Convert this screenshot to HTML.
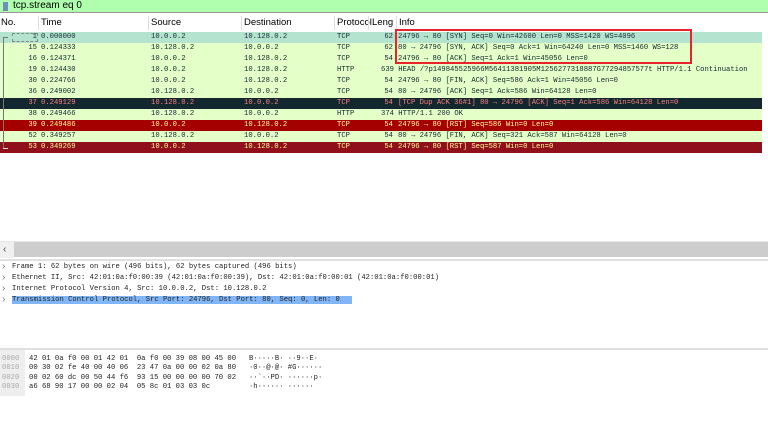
<!DOCTYPE html>
<html><head><style>
*{margin:0;padding:0;box-sizing:border-box}
body{width:768px;height:436px;background:#fff;position:relative;overflow:hidden;font-family:"Liberation Mono",monospace;font-size:7.2px}
.filter{position:absolute;left:0;top:0;width:768px;height:13px;background:#afffaf;border-bottom:1px solid #999;font-family:"Liberation Sans",sans-serif;font-size:10px;line-height:12px;padding-left:13px;color:#000}
.filter .bm{position:absolute;left:3px;top:2px;width:5px;height:9px;background:#6f8fbf}
.hdr{position:absolute;top:14px;left:0;width:768px;height:18px;font-family:"Liberation Sans",sans-serif;font-size:9.5px;line-height:18px;background:#fff}
.hdr span{position:absolute;top:0}
.hdr i{position:absolute;top:2px;width:1px;height:14px;background:#ddd}
.row{position:absolute;left:0;width:762px;height:11px;line-height:11px;white-space:pre}
.row span{position:absolute;top:0}
.g{background:#e4ffc7;color:#12272e}
.s{background:#b4e4d0;color:#12272e}
.d{background:#12272e;color:#f78080}
.r{background:#a40000;color:#fffc9c}
.r2{background:#8f0f1b;color:#fffc9c}
.box{position:absolute;left:395px;top:29px;width:297px;height:35px;border:2px solid #e8232a}
.sb{position:absolute;left:0;top:241px;width:768px;height:16px;background:#cdcdcd;border-top:1px solid #e6e6e6}
.sb .l{position:absolute;left:0;top:0;width:14px;height:16px;background:#f0f0f0;font-family:"Liberation Sans";font-size:10px;line-height:15px;padding-left:3px;color:#444}
.det{position:absolute;left:0;top:259px;width:768px;border-top:2px solid #e0e0e0}
.dl{height:11px;line-height:11px;padding-left:12px;white-space:pre;position:relative;color:#222}
.dl:before{content:"›";position:absolute;left:2px;top:-1px;color:#777;font-family:"Liberation Sans";font-size:10px}
.dl.sel span{background:#80b6f6;padding-right:12px}
.hex{position:absolute;left:0;top:348px;width:768px;height:88px;border-top:2px solid #e0e0e0}
.gut{position:absolute;left:0;top:0;width:25px;height:46px;background:#eee}
.hl{position:absolute;left:0;height:9.3px;line-height:9.3px;white-space:pre;color:#222}
.hl b{font-weight:normal;color:#aaa;position:absolute;left:2px}
</style></head><body>
<div class="filter"><div class="bm"></div>tcp.stream eq 0</div>
<div class="hdr">
<span style="left:1px">No.</span><i style="left:38px"></i>
<span style="left:41px">Time</span><i style="left:148px"></i>
<span style="left:151px">Source</span><i style="left:241px"></i>
<span style="left:244px">Destination</span><i style="left:334px"></i>
<span style="left:337px">Protocol</span><i style="left:368px"></i>
<span style="left:372px;background:#fff;width:24px;overflow:hidden">Leng</span><i style="left:396px"></i>
<span style="left:399px">Info</span>
</div>
<div class="row s" style="top:32px"><span style="left:12px;top:1px;width:26px;height:9px;border:1px dashed #888"></span><span style="right:725px">1</span><span style="left:41px">0.000000</span><span style="left:151px">10.0.0.2</span><span style="left:244px">10.128.0.2</span><span style="left:337px">TCP</span><span style="right:369px">62</span><span style="left:398px">24796 → 80 [SYN] Seq=0 Win=42600 Len=0 MSS=1420 WS=4096</span></div>
<div class="row g" style="top:43px"><span style="right:725px">15</span><span style="left:41px">0.124333</span><span style="left:151px">10.128.0.2</span><span style="left:244px">10.0.0.2</span><span style="left:337px">TCP</span><span style="right:369px">62</span><span style="left:398px">80 → 24796 [SYN, ACK] Seq=0 Ack=1 Win=64240 Len=0 MSS=1460 WS=128</span></div>
<div class="row g" style="top:54px"><span style="right:725px">16</span><span style="left:41px">0.124371</span><span style="left:151px">10.0.0.2</span><span style="left:244px">10.128.0.2</span><span style="left:337px">TCP</span><span style="right:369px">54</span><span style="left:398px">24796 → 80 [ACK] Seq=1 Ack=1 Win=45056 Len=0</span></div>
<div class="row g" style="top:65px"><span style="right:725px">19</span><span style="left:41px">0.124430</span><span style="left:151px">10.0.0.2</span><span style="left:244px">10.128.0.2</span><span style="left:337px">HTTP</span><span style="left:381px">639 HEAD /?p149845525966M56411381905M1256277318887G77294857577t HTTP/1.1 Continuation</span></div>
<div class="row g" style="top:76px"><span style="right:725px">30</span><span style="left:41px">0.224766</span><span style="left:151px">10.0.0.2</span><span style="left:244px">10.128.0.2</span><span style="left:337px">TCP</span><span style="right:369px">54</span><span style="left:398px">24796 → 80 [FIN, ACK] Seq=586 Ack=1 Win=45056 Len=0</span></div>
<div class="row g" style="top:87px"><span style="right:725px">36</span><span style="left:41px">0.249002</span><span style="left:151px">10.128.0.2</span><span style="left:244px">10.0.0.2</span><span style="left:337px">TCP</span><span style="right:369px">54</span><span style="left:398px">80 → 24796 [ACK] Seq=1 Ack=586 Win=64128 Len=0</span></div>
<div class="row d" style="top:98px"><span style="right:725px">37</span><span style="left:41px">0.249129</span><span style="left:151px">10.128.0.2</span><span style="left:244px">10.0.0.2</span><span style="left:337px">TCP</span><span style="right:369px">54</span><span style="left:398px">[TCP Dup ACK 36#1] 80 → 24796 [ACK] Seq=1 Ack=586 Win=64128 Len=0</span></div>
<div class="row g" style="top:109px"><span style="right:725px">38</span><span style="left:41px">0.249466</span><span style="left:151px">10.128.0.2</span><span style="left:244px">10.0.0.2</span><span style="left:337px">HTTP</span><span style="left:381px">374 HTTP/1.1 200 OK</span></div>
<div class="row r" style="top:120px"><span style="right:725px">39</span><span style="left:41px">0.249486</span><span style="left:151px">10.0.0.2</span><span style="left:244px">10.128.0.2</span><span style="left:337px">TCP</span><span style="right:369px">54</span><span style="left:398px">24796 → 80 [RST] Seq=586 Win=0 Len=0</span></div>
<div class="row g" style="top:131px"><span style="right:725px">52</span><span style="left:41px">0.349257</span><span style="left:151px">10.128.0.2</span><span style="left:244px">10.0.0.2</span><span style="left:337px">TCP</span><span style="right:369px">54</span><span style="left:398px">80 → 24796 [FIN, ACK] Seq=321 Ack=587 Win=64128 Len=0</span></div>
<div class="row r2" style="top:142px"><span style="right:725px">53</span><span style="left:41px">0.349269</span><span style="left:151px">10.0.0.2</span><span style="left:244px">10.128.0.2</span><span style="left:337px">TCP</span><span style="right:369px">54</span><span style="left:398px">24796 → 80 [RST] Seq=587 Win=0 Len=0</span></div>
<div style="position:absolute;left:3px;top:37px;width:1px;height:112px;background:#777"></div>
<div style="position:absolute;left:3px;top:37px;width:5px;height:1px;background:#777"></div>
<div style="position:absolute;left:3px;top:148px;width:5px;height:1px;background:#ddd"></div>
<div class="box"></div>
<div class="sb"><div class="l">‹</div></div>
<div class="det">
<div class="dl" style="margin-top:1px">Frame 1: 62 bytes on wire (496 bits), 62 bytes captured (496 bits)</div>
<div class="dl">Ethernet II, Src: 42:01:0a:f0:00:39 (42:01:0a:f0:00:39), Dst: 42:01:0a:f0:00:01 (42:01:0a:f0:00:01)</div>
<div class="dl">Internet Protocol Version 4, Src: 10.0.0.2, Dst: 10.128.0.2</div>
<div class="dl sel"><span>Transmission Control Protocol, Src Port: 24796, Dst Port: 80, Seq: 0, Len: 0</span></div>
</div>
<div class="hex"><div class="gut"></div>
<div class="hl" style="top:5px"><b>0000</b><span style="position:absolute;left:29px">42 01 0a f0 00 01 42 01  0a f0 00 39 08 00 45 00   B·····B· ··9··E·</span></div>
<div class="hl" style="top:14.3px"><b>0010</b><span style="position:absolute;left:29px">00 30 02 fe 40 00 40 06  23 47 0a 00 00 02 0a 80   ·0··@·@· #G······</span></div>
<div class="hl" style="top:23.6px"><b>0020</b><span style="position:absolute;left:29px">00 02 60 dc 00 50 44 f6  93 15 00 00 00 00 70 02   ··`··PD· ······p·</span></div>
<div class="hl" style="top:32.9px"><b>0030</b><span style="position:absolute;left:29px">a6 68 90 17 00 00 02 04  05 8c 01 03 03 0c         ·h······ ······</span></div>
</div>
</body></html>
